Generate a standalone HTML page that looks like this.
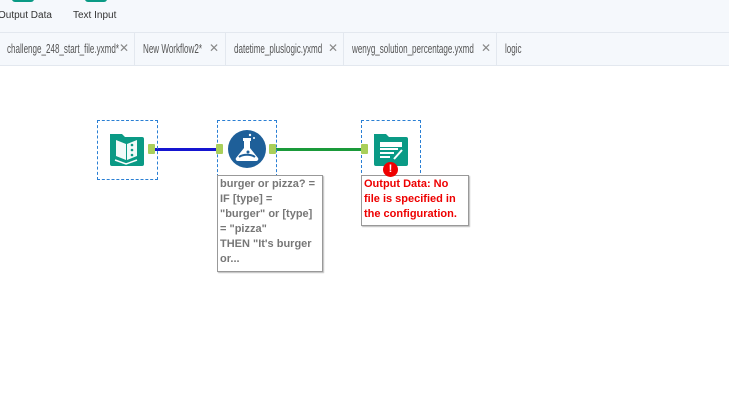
<!DOCTYPE html>
<html><head><style>
body{margin:0;width:729px;height:410px;overflow:hidden;background:#fff;font-family:"Liberation Sans",sans-serif;position:relative}
.tb{position:absolute;left:0;top:0;width:729px;height:32px;background:#f5f8fc}
.tabs{position:absolute;left:0;top:32px;width:729px;height:32px;background:#f5f8fc;border-top:1px solid #e3e8ef;border-bottom:1px solid #e3e8ef}
.sep{position:absolute;top:0;width:1px;height:32px;background:#e3e8ef}
.tt{position:absolute;top:8px;font-size:13px;color:#555;white-space:nowrap;transform:scaleX(0.62);transform-origin:0 0}
.x{position:absolute;top:8px;color:#888;font-size:12px}
.abs{position:absolute}
.dash{position:absolute;border:1px dashed #2a7fd4;box-sizing:border-box}
.ann{position:absolute;border:1px solid #999;box-shadow:1px 1px 1px #bbb;background:#fff;font-size:11px;font-weight:bold;line-height:15px;padding:1px 2px;box-sizing:border-box;white-space:nowrap}
.conn{position:absolute;width:7px;height:10px;background:#a9cf5a;border-radius:1px}
</style></head><body>
<div class="tb">
 <div class="abs" style="left:12px;top:-4px;width:22px;height:6px;background:#0a9a85;border-radius:0 0 3px 3px"></div>
 <div class="abs" style="left:85px;top:-4px;width:22px;height:6px;background:#0a9a85;border-radius:0 0 3px 3px"></div>
 <div class="abs" style="left:-2px;top:10px;font-size:10px;color:#333">Output Data</div>
 <div class="abs" style="left:73px;top:10px;font-size:10px;color:#333">Text Input</div>
</div>
<div class="tabs">
 <div class="tt" style="left:7px">challenge_248_start_file.yxmd*</div><div class="x" style="left:119px">✕</div>
 <div class="sep" style="left:134px"></div>
 <div class="tt" style="left:143px">New Workflow2*</div><div class="x" style="left:209px">✕</div>
 <div class="sep" style="left:225px"></div>
 <div class="tt" style="left:234px">datetime_pluslogic.yxmd</div><div class="x" style="left:328px">✕</div>
 <div class="sep" style="left:343px"></div>
 <div class="tt" style="left:352px">wenyg_solution_percentage.yxmd</div><div class="x" style="left:481px">✕</div>
 <div class="sep" style="left:496px"></div>
 <div class="tt" style="left:505px">logic</div>
</div>

<div class="abs" style="left:155px;top:148px;width:65px;height:3px;background:#1515d0"></div>
<div class="abs" style="left:275px;top:148px;width:90px;height:3px;background:#1a9a3a"></div>

<div class="dash" style="left:97px;top:120px;width:61px;height:60px"></div>
<svg class="abs" style="left:108px;top:130px" width="38" height="38" viewBox="0 0 38 38">
 <path d="M2 4h12l3 3h17a2 2 0 0 1 2 2v25a2 2 0 0 1-2 2H4a2 2 0 0 1-2-2z" fill="#0a9a85"/>
 <path d="M8 10l10 4v16l-10-4z M29 10l-10 4v16l10-4z" fill="#fff" opacity=".95"/>
 <circle cx="24" cy="15" r="1.3" fill="#0a9a85"/><circle cx="24" cy="20" r="1.3" fill="#0a9a85"/><circle cx="24" cy="25" r="1.3" fill="#0a9a85"/>
 <path d="M7 30l11 4 11-4" stroke="#fff" stroke-width="1.5" fill="none"/>
</svg>
<div class="conn" style="left:148px;top:144px"></div>

<div class="dash" style="left:217px;top:120px;width:60px;height:57px"></div>
<svg class="abs" style="left:227px;top:129px" width="40" height="40" viewBox="0 0 40 40">
 <circle cx="20" cy="20" r="19" fill="#1e5f99"/>
 <path d="M16 9h8v3h-1v7l8 10a2 2 0 0 1-2 3H11a2 2 0 0 1-2-3l8-10v-7h-1z" fill="#fff"/>
 <path d="M12 28c4-3 12-3 16 0" stroke="#1e5f99" stroke-width="2" fill="none"/>
 <circle cx="21" cy="23" r="1.5" fill="#1e5f99"/><circle cx="23" cy="6" r="1.2" fill="#fff"/><circle cx="27" cy="9" r="1" fill="#fff"/>
</svg>
<div class="conn" style="left:216px;top:144px"></div>
<div class="conn" style="left:269px;top:144px"></div>
<div class="ann" style="left:217px;top:175px;width:106px;height:97px;color:#777">burger or pizza? =<br>IF [type] =<br>"burger" or [type]<br>= "pizza"<br>THEN "It's burger<br>or...</div>

<div class="dash" style="left:361px;top:120px;width:60px;height:58px"></div>
<svg class="abs" style="left:372px;top:130px" width="38" height="38" viewBox="0 0 38 38">
 <path d="M2 4h12l3 3h17a2 2 0 0 1 2 2v25a2 2 0 0 1-2 2H4a2 2 0 0 1-2-2z" fill="#0a9a85"/>
 <path d="M8 12h22v5H8z" fill="#fff"/>
 <path d="M8 19h18M8 23h14M8 27h10" stroke="#fff" stroke-width="2"/>
 <path d="M22 29l8-9" stroke="#fff" stroke-width="2"/>
</svg>
<div class="conn" style="left:361px;top:144px"></div>
<div class="ann" style="left:361px;top:175px;width:108px;height:51px;color:#e00">Output Data: No<br>file is specified in<br>the configuration.</div>
<div class="abs" style="left:383px;top:162px;width:15px;height:15px;border-radius:50%;background:#e00;color:#fff;font-size:11px;font-weight:bold;text-align:center;line-height:15px">!</div>
</body></html>
